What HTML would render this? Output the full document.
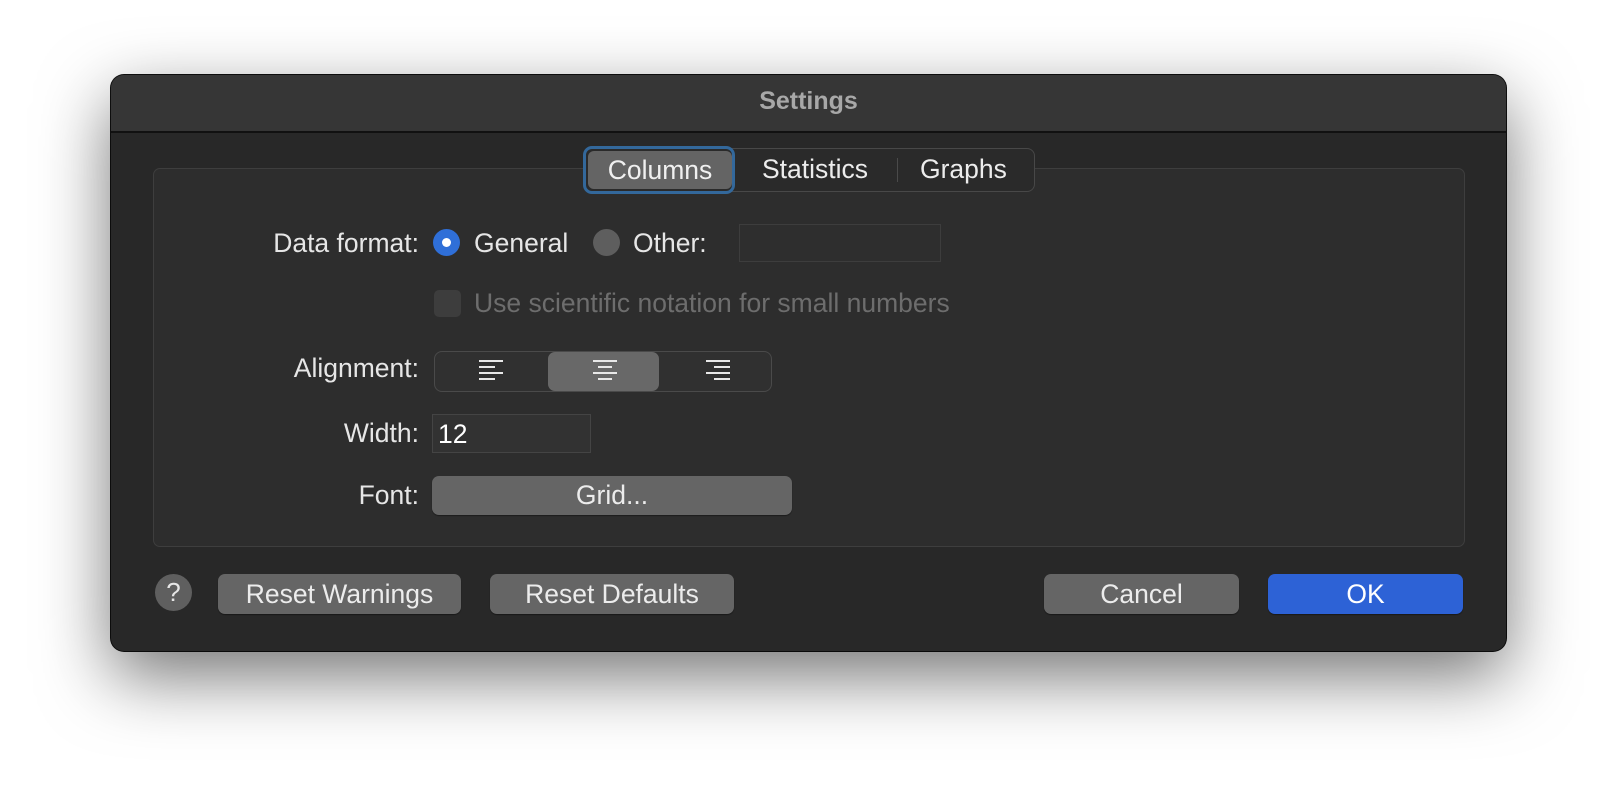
<!DOCTYPE html>
<html><head><style>
html,body{margin:0;padding:0;width:1618px;height:800px;background:#fff;overflow:hidden;font-family:"Liberation Sans",sans-serif;}
.a{position:absolute;}
#win{left:111px;top:75px;width:1395px;height:576px;border-radius:13px;background:#282828;box-shadow:0 25px 70px rgba(0,0,0,.55),0 0 0 1px #111;overflow:hidden;}
#title{left:0;top:0;width:1395px;height:56px;background:#363636;border-bottom:2px solid #111;}
.lbl{color:#e6e6e6;font-size:26.5px;line-height:32px;white-space:nowrap;}
.r{text-align:right;}
.btn{background:#656565;border-radius:7px;color:#ececec;font-size:26.5px;text-align:center;box-shadow:0 1px 1px rgba(0,0,0,.4);}
</style></head><body>
<div id="win" class="a">
 <div id="title" class="a"></div>
 <div class="a" style="left:0;width:1395px;top:11px;text-align:center;color:#a8a8a8;font-weight:bold;font-size:25px;line-height:30px;">Settings</div>
 <div class="a" style="left:42px;top:93px;width:1310px;height:377px;border:1px solid #3e3e3e;border-radius:7px;background:#2d2d2d;"></div>
 <div class="a" style="left:472px;top:73px;width:450px;height:42px;border:1px solid #484848;border-radius:8px;background:#2a2a2a;"></div>
 <div class="a" style="left:472px;top:71px;width:146px;height:42px;border-radius:9px;border:3px solid #33689b;"></div>
 <div class="a" style="left:477px;top:76px;width:144px;height:38px;border-radius:6px;background:#646464;color:#f0f0f0;font-size:26.5px;text-align:center;line-height:38px;">Columns</div>
 <div class="a lbl" style="left:651px;top:78px;color:#ececec;">Statistics</div>
 <div class="a" style="left:786px;top:83px;width:1px;height:24px;background:#4a4a4a;"></div>
 <div class="a lbl" style="left:809px;top:78px;color:#ececec;">Graphs</div>
 <div class="a lbl r" style="left:0;width:308px;top:152px;">Data format:</div>
 <div class="a" style="left:322px;top:154px;width:27px;height:27px;border-radius:50%;background:#2f6fd8;"></div>
 <div class="a" style="left:331px;top:163px;width:9px;height:9px;border-radius:50%;background:#fff;"></div>
 <div class="a lbl" style="left:363px;top:152px;">General</div>
 <div class="a" style="left:482px;top:154px;width:27px;height:27px;border-radius:50%;background:#5e5e5e;"></div>
 <div class="a lbl" style="left:522px;top:152px;">Other:</div>
 <div class="a" style="left:628px;top:149px;width:202px;height:38px;background:#2e2e2e;border:1px solid #3d3d3d;box-sizing:border-box;"></div>
 <div class="a" style="left:323px;top:215px;width:27px;height:27px;border-radius:5px;background:#3d3d3d;"></div>
 <div class="a lbl" style="left:363px;top:212px;color:#6d6d6d;">Use scientific notation for small numbers</div>
 <div class="a lbl r" style="left:0;width:308px;top:277px;">Alignment:</div>
 <div class="a" style="left:323px;top:276px;width:338px;height:41px;border:1px solid #4a4a4a;border-radius:8px;background:#303030;box-sizing:border-box;"></div>
 <div class="a" style="left:437px;top:277px;width:111px;height:39px;border-radius:7px;background:#686868;"></div>
 <svg class="a" style="left:340px;top:281px" width="310" height="30">
  <g stroke="#e8e8e8" stroke-width="2">
   <path d="M28 5h24M28 11h16M28 17h24M28 23h16"/>
   <path d="M142 5h24M147 11h14M142 17h24M147 23h14"/>
   <path d="M255 5h24M263 11h16M255 17h24M263 23h16"/>
  </g>
 </svg>
 <div class="a lbl r" style="left:0;width:308px;top:342px;">Width:</div>
 <div class="a" style="left:321px;top:339px;width:159px;height:39px;background:#323232;border:1px solid #444;box-sizing:border-box;"></div>
 <div class="a lbl" style="left:327px;top:343px;color:#fff;">12</div>
 <div class="a lbl r" style="left:0;width:308px;top:404px;">Font:</div>
 <div class="a btn" style="left:321px;top:401px;width:360px;height:39px;line-height:38px;">Grid...</div>
 <div class="a" style="left:44px;top:499px;width:37px;height:37px;border-radius:50%;background:#5f5f5f;color:#e6e6e6;font-size:26px;text-align:center;line-height:37px;">?</div>
 <div class="a btn" style="left:107px;top:499px;width:243px;height:40px;line-height:40px;">Reset Warnings</div>
 <div class="a btn" style="left:379px;top:499px;width:244px;height:40px;line-height:40px;">Reset Defaults</div>
 <div class="a btn" style="left:933px;top:499px;width:195px;height:40px;line-height:40px;">Cancel</div>
 <div class="a btn" style="left:1157px;top:499px;width:195px;height:40px;line-height:40px;background:#2d62d6;color:#fff;">OK</div>
</div>
</body></html>
